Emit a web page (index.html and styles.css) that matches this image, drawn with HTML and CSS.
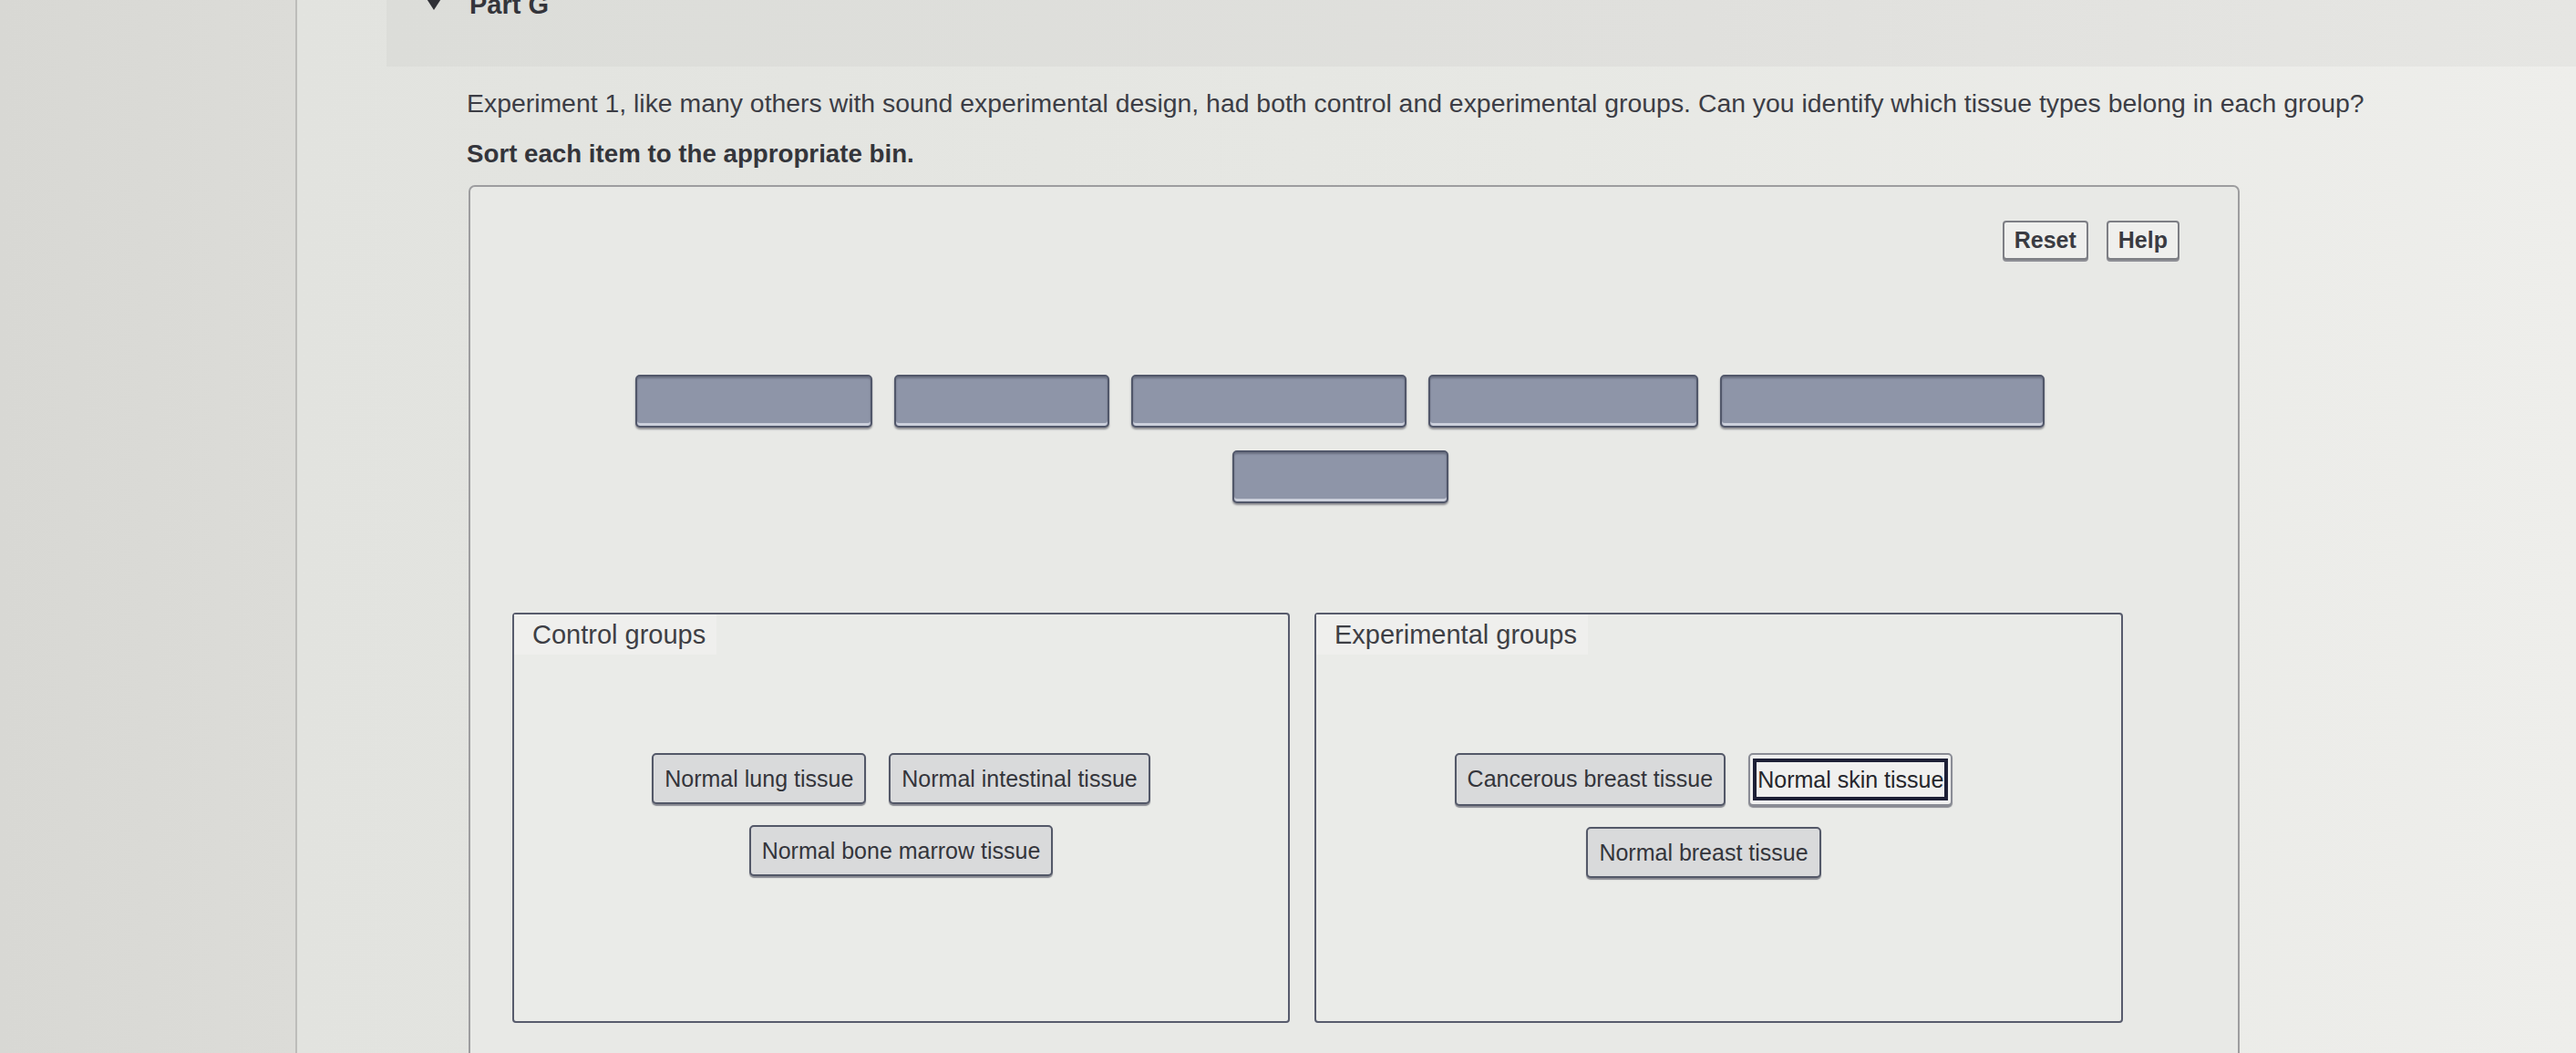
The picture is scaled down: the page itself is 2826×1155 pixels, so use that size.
FILE: index.html
```html
<!DOCTYPE html>
<html lang="en">
<head>
<meta charset="utf-8">
<title>Part G</title>
<link rel="stylesheet" href="styles.css">
</head>
<body>
<div class="page">
  <aside class="sidebar"></aside>
  <main class="main">
    <div class="part-header">
      <svg class="caret" width="26" height="20" viewBox="0 0 26 20"><polygon points="0,0 26,0 13,20" fill="#2f3036"/></svg>
      <h2 class="part-title">Part G</h2>
    </div>
    <section class="content">
      <p class="question">Experiment 1, like many others with sound experimental design, had both control and experimental groups. Can you identify which tissue types belong in each group?</p>
      <p class="instruction">Sort each item to the appropriate bin.</p>
      <div class="sort-box">
        <div class="toolbar">
          <button class="btn">Reset</button>
          <button class="btn">Help</button>
        </div>
        <div class="slots">
          <div class="slot slot-1"></div>
          <div class="slot slot-2"></div>
          <div class="slot slot-3"></div>
          <div class="slot slot-4"></div>
          <div class="slot slot-5"></div>
          <div class="slot slot-6"></div>
        </div>
        <div class="bins">
          <div class="bin bin-control">
            <div class="bin-title">Control groups</div>
            <div class="chips">
              <div class="chip">Normal lung tissue</div>
              <div class="chip">Normal intestinal tissue</div>
              <div class="chip">Normal bone marrow tissue</div>
            </div>
          </div>
          <div class="bin bin-experimental">
            <div class="bin-title">Experimental groups</div>
            <div class="chips">
              <div class="chip">Cancerous breast tissue</div>
              <div class="chip chip-focused"><span class="chip-focus">Normal skin tissue</span></div>
              <div class="chip">Normal breast tissue</div>
            </div>
          </div>
        </div>
      </div>
    </section>
  </main>
</div>
</body>
</html>
```

FILE: styles.css
```css
* { box-sizing: border-box; }

html, body {
  margin: 0;
  padding: 0;
  width: 2826px;
  height: 1155px;
  overflow: hidden;
}

body {
  font-family: "Liberation Sans", Arial, sans-serif;
  color: #3a3b42;
  background: #e4e5e1;
}

.page {
  display: flex;
  height: 1155px;
}

.sidebar {
  width: 326px;
  flex: none;
  background: linear-gradient(90deg, #d8d8d4, #dcdcd8);
  border-right: 2px solid #bdbdba;
}

.main {
  flex: 1;
  display: flex;
  flex-direction: column;
  background: linear-gradient(90deg, #e2e3df 0%, #e7e8e4 55%, #eeeeeb 100%);
}

.part-header {
  margin-left: 98px;
  height: 73px;
  flex: none;
  display: flex;
  align-items: flex-start;
  gap: 26px;
  padding-left: 39px;
  background: linear-gradient(90deg, #dcddd9, #e0e0dd 60%, #e6e6e3);
  overflow: hidden;
}

.caret {
  margin-top: -9px;
}

.part-title {
  margin: -9px 0 0;
  font-size: 29px;
  line-height: 29px;
  font-weight: bold;
  color: #34353b;
}

.content {
  padding-left: 186px;
}

.question {
  margin: 23px 0 0;
  font-size: 28.4px;
  line-height: 34px;
  white-space: nowrap;
  color: #3c3d45;
}

.instruction {
  margin: 22px 0 17px;
  font-size: 27.7px;
  line-height: 34px;
  font-weight: bold;
  color: #34353b;
}

.sort-box {
  margin-left: 2px;
  width: 1943px;
  height: 1000px;
  padding: 37px 64px 0 48px;
  border: 2px solid #9d9d9f;
  border-radius: 7px;
  background: #e8e9e6;
}

.toolbar {
  display: flex;
  justify-content: flex-end;
  gap: 20px;
}

.btn {
  font-family: "Liberation Sans", Arial, sans-serif;
  font-size: 25px;
  line-height: 31px;
  font-weight: bold;
  color: #3a3b42;
  padding: 4px 11px;
  border: 2px solid #7d7e84;
  border-radius: 4px;
  background: #efefed;
  box-shadow: 0 2px 0 #8f9096;
}

.slots {
  width: 1560px;
  margin: 126px 0 0 126px;
  display: flex;
  flex-wrap: wrap;
  justify-content: center;
  gap: 25px 24px;
}

.slot {
  height: 58px;
  border: 2px solid #51576a;
  border-radius: 5px;
  background: #8e95a8;
  box-shadow: inset 0 2px 2px rgba(40, 44, 60, 0.35), inset 0 -3px 0 #cbcfdb, 0 2px 2px rgba(30, 32, 45, 0.45);
}

.slot-1 { width: 260px; }
.slot-2 { width: 236px; }
.slot-3 { width: 302px; }
.slot-4 { width: 296px; }
.slot-5 { width: 356px; }
.slot-6 { width: 237px; }

.bins {
  margin-top: 120px;
  margin-left: -2px;
  display: flex;
  gap: 27px;
}

.bin {
  height: 450px;
  border: 2px solid #575b6c;
  border-radius: 4px;
  background: #eaebe8;
}

.bin-control { width: 853px; }
.bin-experimental { width: 887px; }

.bin-title {
  display: inline-block;
  padding: 5px 12px 5px 20px;
  font-size: 29px;
  line-height: 34px;
  color: #3e3f45;
  background: #efefed;
}

.chips {
  max-width: 640px;
  margin: 108px auto 0;
  display: flex;
  flex-wrap: wrap;
  justify-content: center;
  gap: 23px 25px;
}

.chip {
  font-size: 25px;
  line-height: 30px;
  padding: 11px 12px;
  border: 2px solid #535868;
  border-radius: 5px;
  background: #d9dadb;
  color: #34353b;
  white-space: nowrap;
  box-shadow: 0 2px 1px rgba(40, 42, 60, 0.5);
}

.bin-experimental .chips {
  margin-left: 105px;
}

.chip-focused {
  padding: 4px 3px;
  border-color: #8a8c95;
  background: #f0f0ef;
}

.chip-focus {
  display: block;
  padding: 4px 1px;
  border: 4px solid #1e2036;
  color: #25262c;
}
```
